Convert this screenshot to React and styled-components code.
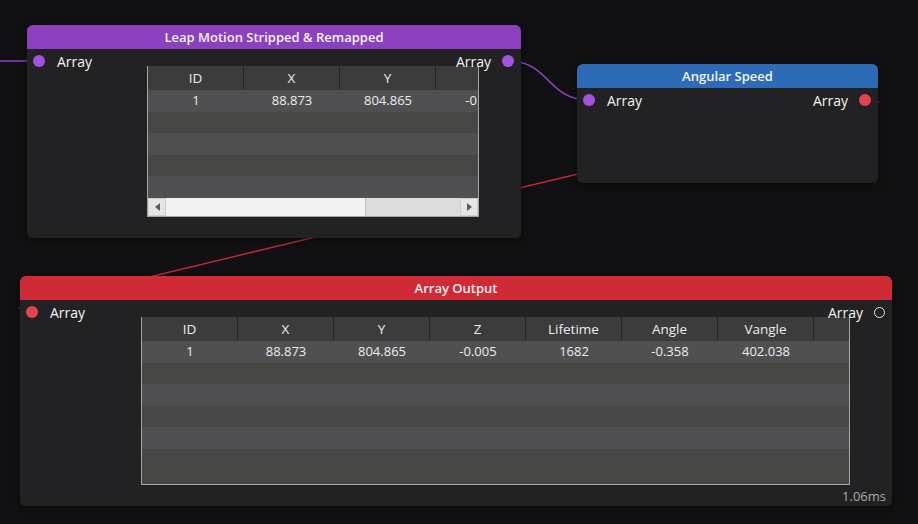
import React from "react";
import styled, { createGlobalStyle } from "styled-components";

const GlobalStyle = createGlobalStyle`
  html, body {
    margin: 0;
    padding: 0;
    background: #111113;
  }
  body {
    font-family: "Open Sans", "Noto Sans", sans-serif;
  }
`;

const Canvas = styled.div`
  position: relative;
  width: 918px;
  height: 524px;
  overflow: hidden;
  background: #111113;
`;

const Wires = styled.svg`
  position: absolute;
  left: 0;
  top: 0;
  width: 100%;
  height: 100%;
`;

const Node = styled.div`
  position: absolute;
  left: ${(p) => p.$x}px;
  top: ${(p) => p.$y}px;
  width: ${(p) => p.$w}px;
  height: ${(p) => p.$h}px;
  background: #222224;
  border-radius: 6px 6px 5px 5px;
  box-shadow: 0 2px 8px rgba(0, 0, 0, 0.45);
  display: flex;
  flex-direction: column;
`;

const Header = styled.div`
  height: 24px;
  flex-shrink: 0;
  background: ${(p) => p.$color};
  border-radius: 6px 6px 0 0;
  color: #f2f2f2;
  font-size: 13px;
  font-weight: 600;
  line-height: 24px;
  text-align: center;
`;

const PortRow = styled.div`
  position: relative;
  z-index: 1;
  height: 24px;
  flex-shrink: 0;
  display: flex;
  align-items: center;
  justify-content: space-between;
  padding: 0 7px 0 6px;
`;

const Port = styled.div`
  display: flex;
  align-items: center;
  gap: ${(p) => (p.$right ? 11 : 12)}px;
  color: #f4f4f4;
  font-size: 14px;
`;

const Dot = styled.span`
  width: ${(p) => (p.$hollow ? 11 : 12)}px;
  height: ${(p) => (p.$hollow ? 11 : 12)}px;
  border-radius: 50%;
  box-sizing: border-box;
  background: ${(p) => (p.$hollow ? "transparent" : p.$color)};
  border: ${(p) => (p.$hollow ? "1.5px solid #e8e8e8" : "none")};
`;

const Grid = styled.div`
  margin: -7px 0 0 ${(p) => p.$left}px;
  width: ${(p) => p.$w}px;
  height: ${(p) => p.$h}px;
  flex-shrink: 0;
  box-sizing: border-box;
  border-left: 1px solid #a4a4a4;
  border-right: 1px solid #a4a4a4;
  border-bottom: 1px solid #a4a4a4;
  background: #474746;
  display: flex;
  flex-direction: column;
  overflow: hidden;
`;

const Viewport = styled.div`
  flex: 1;
  min-height: 0;
  overflow: hidden;
`;

const HeadRow = styled.div`
  display: flex;
  height: 24px;
  background: #3c3c3d;
`;

const HeadCell = styled.div`
  flex: 0 0 96px;
  box-sizing: border-box;
  border-right: 1px solid #262628;
  text-align: center;
  line-height: 24px;
  font-size: 13.5px;
  color: #ececec;
`;

const Row = styled.div`
  display: flex;
  height: 21.6px;
  background: ${(p) => (p.$odd ? "#474746" : "#505052")};
`;

const Cell = styled.div`
  flex: 0 0 96px;
  text-align: center;
  line-height: 21.6px;
  font-size: 13px;
  color: #ececec;
`;

const HScroll = styled.div`
  height: 18px;
  flex-shrink: 0;
  display: flex;
  background: #dcdcdc;
`;

const ScrollBtn = styled.div`
  width: 18px;
  flex-shrink: 0;
  box-sizing: border-box;
  display: flex;
  align-items: center;
  justify-content: center;
  background: #e6e6e6;
  border: 1px solid #cdcdcd;
`;

const Arrow = styled.span`
  width: 0;
  height: 0;
  border-top: 4px solid transparent;
  border-bottom: 4px solid transparent;
  ${(p) =>
    p.$dir === "left"
      ? "border-right: 5px solid #5e5e5e;"
      : "border-left: 5px solid #5e5e5e;"}
`;

const Thumb = styled.div`
  width: 200px;
  flex-shrink: 0;
  background: #f3f3f3;
  border-right: 1px solid #c2c2c2;
  box-sizing: border-box;
`;

const Track = styled.div`
  flex: 1;
`;

const Timing = styled.div`
  height: 22px;
  line-height: 22px;
  padding-right: 6px;
  text-align: right;
  font-size: 13px;
  color: #a9a9a9;
`;

const columns = ["ID", "X", "Y", "Z", "Lifetime", "Angle", "Vangle"];
const record = ["1", "88.873", "804.865", "-0.005", "1682", "-0.358", "402.038"];

function DataTable({ left, width, height, scroll }) {
  const rows = [record, null, null, null, null];
  return (
    <Grid $left={left} $w={width} $h={height}>
      <Viewport>
        <HeadRow>
          {columns.map((c) => (
            <HeadCell key={c}>{c}</HeadCell>
          ))}
        </HeadRow>
        {rows.map((r, i) => (
          <Row key={i} $odd={i % 2 === 1}>
            {r && r.map((v, j) => <Cell key={j}>{v}</Cell>)}
          </Row>
        ))}
      </Viewport>
      {scroll && (
        <HScroll>
          <ScrollBtn>
            <Arrow $dir="left" />
          </ScrollBtn>
          <Thumb />
          <Track />
          <ScrollBtn>
            <Arrow $dir="right" />
          </ScrollBtn>
        </HScroll>
      )}
    </Grid>
  );
}

const PURPLE = "#a652e0";
const RED = "#e8414f";

export default function App() {
  return (
    <>
      <GlobalStyle />
      <Canvas>
        <Wires viewBox="0 0 918 524">
          <path d="M0 61 L33 61" stroke="#8d44c6" strokeWidth="1.6" fill="none" />
          <path
            d="M508 61 C550 61, 547 100, 589 100"
            stroke="#8d44c6"
            strokeWidth="1.6"
            fill="none"
          />
          <path
            d="M866 100 C874 100, 880 101, 878 102 L20 308 C24 310, 28 312, 32 312"
            stroke="#c9283a"
            strokeWidth="1.4"
            fill="none"
          />
        </Wires>

        <Node $x={27} $y={25} $w={494} $h={213}>
          <Header $color="#8b40c0">Leap Motion Stripped &amp; Remapped</Header>
          <PortRow>
            <Port>
              <Dot $color={PURPLE} />
              Array
            </Port>
            <Port $right>
              Array
              <Dot $color={PURPLE} />
            </Port>
          </PortRow>
          <DataTable left={120} width={332} height={151} scroll />
        </Node>

        <Node $x={577} $y={64} $w={301} $h={119}>
          <Header $color="#2e6bb7">Angular Speed</Header>
          <PortRow>
            <Port>
              <Dot $color={PURPLE} />
              Array
            </Port>
            <Port $right>
              Array
              <Dot $color={RED} />
            </Port>
          </PortRow>
        </Node>

        <Node $x={20} $y={276} $w={872} $h={230}>
          <Header $color="#d12a37">Array Output</Header>
          <PortRow>
            <Port>
              <Dot $color={RED} />
              Array
            </Port>
            <Port $right>
              Array
              <Dot $hollow />
            </Port>
          </PortRow>
          <DataTable left={121} width={709} height={168} />
          <Timing>1.06ms</Timing>
        </Node>
      </Canvas>
    </>
  );
}
